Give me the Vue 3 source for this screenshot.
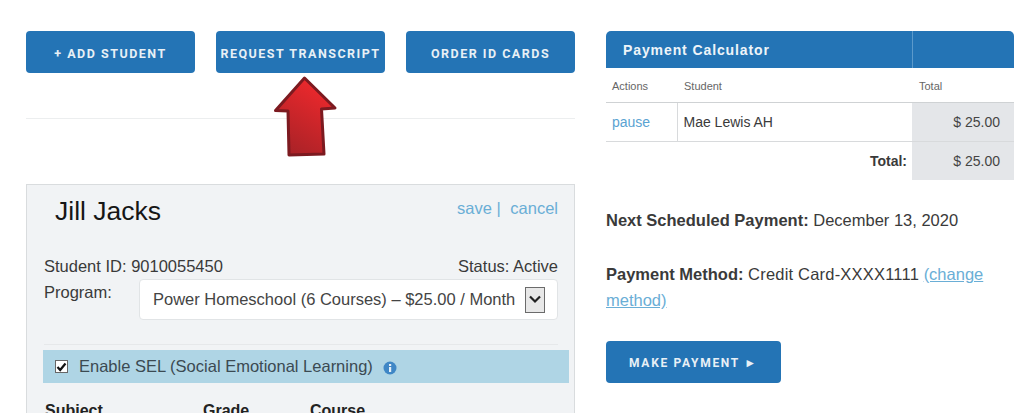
<script setup>
const buttons = ["+ ADD STUDENT", "REQUEST TRANSCRIPT", "ORDER ID CARDS"]
const columns = ["Subject", "Grade", "Course"]
</script>

<template>
	<div class="page">
		<div class="left">
			<div class="actions">
				<button v-for="label in buttons" :key="label" class="btn">{{ label }}</button>
			</div>
			<hr class="rule" />

			<!-- arrow sits over the rule, pointing at the transcript button -->
			<svg class="arrow" width="68" height="84" viewBox="0 0 68 84">
				<defs>
					<linearGradient id="arrowFill" x1="0.7" y1="0.15" x2="0.3" y2="1">
						<stop offset="0" stop-color="#e8282c" />
						<stop offset="1" stop-color="#a92227" />
					</linearGradient>
				</defs>
				<path
					d="M32.5 3 L63 33 L49.5 34 L52 79 L17 80 L16 36 L3.500 35.500 Z"
					fill="url(#arrowFill)"
					stroke="#7c1a20"
					stroke-width="3"
					stroke-linejoin="round"
				/>
			</svg>

			<div class="panel">
				<div class="panelHead">
					<div class="name">Jill Jacks</div>
					<div class="links"><a>save</a> <span class="sep">|</span> <a>cancel</a></div>
				</div>
				<div class="idRow">
					<span>Student ID: 9010055450</span>
					<span>Status: Active</span>
				</div>
				<div class="programRow">
					<span class="programLabel">Program:</span>
					<div class="select">
						<span>Power Homeschool (6 Courses) – $25.00 / Month</span>
						<span class="selectArrow">
							<svg width="14" height="9" viewBox="0 0 14 9">
								<path d="M2 1.500 L7 6.500 L12 1.500" fill="none" stroke="#222" stroke-width="2.200" />
							</svg>
						</span>
					</div>
				</div>
				<div class="divider"></div>
				<div class="sel">
					<span class="check">
						<svg width="11" height="10" viewBox="0 0 11 10">
							<path d="M1.500 5 L4.200 8 L9.500 1.500" fill="none" stroke="#111" stroke-width="2.200" />
						</svg>
					</span>
					<span>Enable SEL (Social Emotional Learning)</span>
					<svg class="info" width="14" height="14" viewBox="0 0 14 14">
						<circle cx="7" cy="7" r="6.500" fill="#3f87c6" />
						<rect x="6" y="6" width="2.200" height="5" fill="#e6f0f8" />
						<rect x="6" y="3" width="2.200" height="2" fill="#e6f0f8" />
					</svg>
				</div>
				<div class="cols">
					<span v-for="col in columns" :key="col">{{ col }}</span>
				</div>
			</div>
		</div>

		<div class="right">
			<div class="calcHead">
				<div class="calcTitle">Payment Calculator</div>
				<div class="calcEnd"></div>
			</div>
			<table class="calc">
				<thead>
					<tr>
						<th class="colAction">Actions</th>
						<th class="colStudent">Student</th>
						<th class="colTotal">Total</th>
					</tr>
				</thead>
				<tbody>
					<tr>
						<td class="pause">pause</td>
						<td class="student">Mae Lewis AH</td>
						<td class="amount">$ 25.00</td>
					</tr>
					<tr>
						<td colspan="2" class="totalLabel">Total:</td>
						<td class="amount">$ 25.00</td>
					</tr>
				</tbody>
			</table>

			<p class="next"><b>Next Scheduled Payment:</b> December 13, 2020</p>
			<p class="method"><b>Payment Method:</b> <span class="card">Credit Card-XXXX1111</span> <a>(change method)</a></p>
			<button class="btn payBtn">MAKE PAYMENT ►</button>
		</div>
	</div>
</template>

<style scoped>
.page {
	display: flex;
	gap: 31px;
	height: 382px;
	padding: 31px 0 0 26px;
	overflow: hidden;
	background: #fff;
	font-family: "Liberation Sans", Arial, sans-serif;
	color: #3a3a3a;
}

.left {
	position: relative;
	width: 549px;
	flex: none;
}

.actions {
	display: flex;
	justify-content: space-between;
}

.btn {
	width: 169px;
	height: 42px;
	padding: 2px 0 0;
	border: none;
	border-radius: 4px;
	background: #2474b5;
	color: #e8f0f6;
	font-family: Roboto, "Liberation Sans", sans-serif;
	font-size: 12.500px;
	font-weight: 700;
	letter-spacing: 1.500px;
}

.rule {
	margin: 45px 0 0;
	border: none;
	border-top: 1px solid #eceeef;
}

.arrow {
	position: absolute;
	left: 246px;
	top: 44px;
}

.panel {
	height: 250px;
	margin-top: 65px;
	padding: 0 16px 0 17px;
	border: 1px solid #d9dcde;
	background: #f1f3f5;
	overflow: hidden;
}

.panelHead {
	display: flex;
	justify-content: space-between;
	padding: 11px 0 0 11px;
	height: 57px;
	box-sizing: border-box;
}

.name {
	color: #161616;
	font-size: 26.500px;
	line-height: 30px;
}

.links {
	padding-top: 1px;
	font-size: 16.500px;
	line-height: 22px;
	color: #6aaed6;
}

.sep {
	margin: 0 5px 0 0;
}

.idRow {
	display: flex;
	justify-content: space-between;
	margin-top: 14px;
	font-size: 16.500px;
	line-height: 20px;
}

.programRow {
	display: flex;
	margin-top: 3px;
}

.programLabel {
	width: 95px;
	flex: none;
	font-size: 16.500px;
	line-height: 20px;
	margin-top: 3px;
}

.select {
	flex: 1;
	height: 41px;
	display: flex;
	align-items: center;
	justify-content: space-between;
	padding: 0 12px 0 13px;
	border: 1px solid #e1e4e6;
	border-radius: 4px;
	background: #fff;
	box-sizing: border-box;
	font-size: 16.500px;
	color: #444;
}

.selectArrow {
	width: 20px;
	height: 26px;
	display: flex;
	align-items: center;
	justify-content: center;
	border: 1px solid #6b6b6b;
	background: #e8e8e8;
	box-sizing: border-box;
}

.divider {
	margin-top: 24px;
	border-top: 1px solid #e6e8ea;
}

.sel {
	display: flex;
	align-items: center;
	width: 526px;
	height: 33px;
	margin: 5px 0 0 -1px;
	padding-left: 12px;
	background: #afd5e5;
	box-sizing: border-box;
	font-size: 16.500px;
	color: #3b4a52;
}

.check {
	width: 13px;
	height: 13px;
	display: flex;
	align-items: center;
	justify-content: center;
	margin-right: 11px;
	border: 1px solid #666;
	background: #fff;
	box-sizing: border-box;
}

.info {
	margin: 2px 0 0 10px;
}

.cols {
	display: grid;
	grid-template-columns: 158px 107px 1fr;
	margin-top: 18px;
	padding-left: 1px;
	font-size: 16px;
	font-weight: 700;
	line-height: 20px;
	color: #222;
}

.right {
	width: 408px;
	flex: none;
}

.calcHead {
	display: flex;
	height: 37px;
	background: #2474b5;
	border-radius: 5px 5px 0 0;
}

.calcTitle {
	width: 307px;
	box-sizing: border-box;
	padding: 1px 0 0 17px;
	border-right: 1px solid #5c9acb;
	color: #eef4f9;
	font-size: 14px;
	font-weight: 700;
	line-height: 37px;
	letter-spacing: 0.900px;
}

.calc {
	width: 100%;
	border-collapse: collapse;
	table-layout: fixed;
	font-size: 14px;
}

.calc th {
	height: 34px;
	padding: 2px 0 0;
	box-sizing: border-box;
	border-bottom: 1px solid #cfd2d4;
	font-size: 11px;
	font-weight: 400;
	color: #666;
	text-align: left;
}

.colAction {
	width: 71px;
	padding-left: 6px !important;
}

.colStudent {
	width: 235px;
	padding-left: 7px !important;
}

.colTotal {
	padding-left: 7px !important;
}

.calc td {
	height: 39px;
	padding: 0;
	box-sizing: border-box;
}

.calc tbody tr:first-child td {
	border-bottom: 1px solid #d8dadc;
}

.pause {
	padding-left: 6px !important;
	color: #5aa3d2;
}

.student {
	padding-left: 6px !important;
	border-left: 1px solid #d8dadc;
}

.amount {
	padding-right: 14px !important;
	background: #e4e6e9;
	text-align: right;
	color: #444;
}

.totalLabel {
	padding-right: 5px !important;
	text-align: right;
	font-weight: 700;
}

.next,
.method {
	margin: 0;
	font-size: 16.500px;
	line-height: 26px;
}

.next {
	margin-top: 27px;
}

.method {
	margin-top: 28px;
}

.card {
	letter-spacing: 0.200px;
}

.method a {
	color: #6aaed6;
	text-decoration: underline;
}

.payBtn {
	display: block;
	width: 175px;
	margin-top: 28px;
	font-size: 12px;
	letter-spacing: 1.700px;
}
</style>

<style>
body {
	background: #fff;
	overflow: hidden;
}
</style>
